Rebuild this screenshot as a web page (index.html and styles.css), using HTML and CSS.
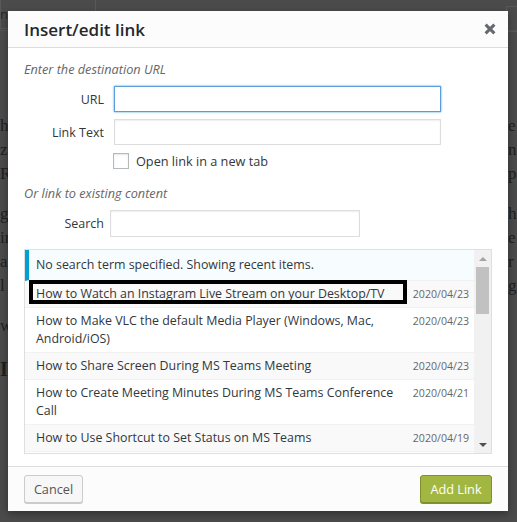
FILE: index.html
```html
<!DOCTYPE html>
<html>
<head>
<meta charset="utf-8">
<link rel="stylesheet" href="styles.css">
</head>
<body>
<div class="page">
  <div class="toolbar">
    <div class="tab">n</div>
    <div class="tab-right"></div>
  </div>
  <div class="content">
    <div class="para">
      <div class="ln"><span class="l">h</span><span class="r">e</span></div>
      <div class="ln"><span class="l">z</span><span class="r">n</span></div>
      <div class="ln"><span class="l">R</span><span class="r">p</span></div>
    </div>
    <div class="para">
      <div class="ln"><span class="l">g</span><span class="r">h</span></div>
      <div class="ln"><span class="l">ir</span><span class="r">e</span></div>
      <div class="ln"><span class="l">a</span><span class="r">r</span></div>
      <div class="ln"><span class="l">l</span><span class="r">g</span></div>
    </div>
    <div class="para">
      <div class="ln"><span class="l">w</span><span class="r"></span></div>
    </div>
    <div class="head"><span class="l">I</span></div>
  </div>
</div>

<div class="modal">
  <div class="modal-head">
    <h1 class="modal-title">Insert/edit link</h1>
    <svg class="close" width="12" height="12" viewBox="0 0 12 12"><path d="M1.6 1.6 L10.4 10.4 M10.4 1.6 L1.6 10.4" stroke="#646970" stroke-width="3" fill="none"/></svg>
  </div>
  <div class="modal-body">
    <div class="hint">Enter the destination URL</div>
    <div class="field first">
      <span class="label">URL</span>
      <span class="input input-focus"></span>
    </div>
    <div class="field">
      <span class="label">Link Text</span>
      <span class="input"></span>
    </div>
    <div class="check-row">
      <span class="checkbox"></span>
      <span class="check-label">Open link in a new tab</span>
    </div>
    <div class="hint hint2">Or link to existing content</div>
    <div class="field search-field">
      <span class="label">Search</span>
      <span class="input search-input"></span>
    </div>
    <div class="results">
      <div class="list">
        <div class="notice">No search term specified. Showing recent items.</div>
        <div class="row alt marked">
          <span class="title">How to Watch an Instagram Live Stream on your Desktop/TV</span>
          <span class="date">2020/04/23</span>
          <span class="mark"></span>
        </div>
        <div class="row">
          <span class="title">How to Make VLC the default Media Player (Windows, Mac,<br>Android/iOS)</span>
          <span class="date">2020/04/23</span>
        </div>
        <div class="row alt">
          <span class="title">How to Share Screen During MS Teams Meeting</span>
          <span class="date">2020/04/23</span>
        </div>
        <div class="row">
          <span class="title">How to Create Meeting Minutes During MS Teams Conference<br>Call</span>
          <span class="date">2020/04/21</span>
        </div>
        <div class="row alt">
          <span class="title">How to Use Shortcut to Set Status on MS Teams</span>
          <span class="date">2020/04/19</span>
        </div>
        <div class="row row-cut"></div>
      </div>
      <div class="scrollbar">
        <div class="sb-btn"><span class="arrow-up"></span></div>
        <div class="sb-track"><div class="sb-thumb"></div></div>
        <div class="sb-btn"><span class="arrow-down"></span></div>
      </div>
    </div>
  </div>
  <div class="modal-foot">
    <button class="btn btn-cancel">Cancel</button>
    <button class="btn btn-primary">Add Link</button>
  </div>
</div>
</body>
</html>
```

FILE: styles.css
```css
html, body {
  margin: 0;
  padding: 0;
}
body {
  width: 517px;
  height: 522px;
  overflow: hidden;
  background: #4b4b4b;
  position: relative;
}

/* dimmed page underneath */
.page {
  font-family: "Liberation Serif", serif;
  color: #1f1f1f;
}
.toolbar {
  height: 30px;
  display: flex;
  justify-content: space-between;
  border-bottom: 1px solid #545454;
}
.tab {
  width: 96px;
  height: 29px;
  box-sizing: border-box;
  border: 1px solid #595959;
  border-top: none;
  font-family: "Open Sans", sans-serif;
  font-size: 13px;
  line-height: 28px;
  color: #262626;
  text-indent: -1px;
}
.tab-right {
  width: 10px;
  height: 24px;
  margin-top: 6px;
  border: 1px solid #595959;
  border-right: none;
}
.content {
  padding-top: 83px;
}
.para {
  margin: 0 0 16px 0;
  font-size: 17px;
  line-height: 24px;
}
.ln {
  display: flex;
  justify-content: space-between;
  height: 24px;
}
.l {
  display: block;
  white-space: nowrap;
}
.r {
  display: block;
  width: 9px;
  white-space: nowrap;
}
.head {
  margin: 20px 0 0 0;
  font-size: 20px;
  font-weight: bold;
}

/* modal */
.modal {
  position: absolute;
  left: 8px;
  top: 11px;
  width: 500px;
  height: 500px;
  background: #fff;
  box-shadow: 0 3px 8px rgba(0, 0, 0, 0.35);
  display: flex;
  flex-direction: column;
  font-family: "Open Sans", sans-serif;
  color: #32373c;
}
.modal-head {
  height: 37px;
  box-sizing: border-box;
  border-bottom: 1px solid #dddddd;
  background: #fcfcfc;
  display: flex;
  align-items: center;
  justify-content: space-between;
  padding: 0 12px 0 16px;
}
.modal-title {
  margin: 0;
  font-size: 17px;
  font-weight: 600;
  color: #23282d;
  line-height: 36px;
  padding-top: 2px;
}
.close {
  display: block;
}
.modal-body {
  flex: 1;
  display: flex;
  flex-direction: column;
  padding: 0 16px 12px 16px;
  min-height: 0;
}
.hint {
  margin-top: 12px;
  font-size: 12.7px;
  line-height: 18px;
  font-style: italic;
  color: #666;
}
.hint2 {
  margin-top: 15px;
}
.field {
  display: flex;
  align-items: center;
  gap: 10px;
  margin-top: 7px;
}
.field.first {
  margin-top: 8px;
}
.label {
  width: 80px;
  text-align: right;
  font-size: 12.5px;
  color: #32373c;
}
.input {
  display: block;
  width: 327px;
  height: 26px;
  box-sizing: border-box;
  border: 1px solid #ddd;
  box-shadow: inset 0 1px 2px rgba(0, 0, 0, 0.07);
  background: #fff;
}
.input-focus {
  border-color: #5b9dd9;
  box-shadow: 0 0 2px rgba(30, 140, 190, 0.8);
}
.check-row {
  display: flex;
  align-items: center;
  gap: 7px;
  margin-top: 7px;
  padding-left: 89px;
}
.checkbox {
  display: block;
  width: 16px;
  height: 16px;
  box-sizing: border-box;
  border: 1px solid #b4b9be;
  background: #fff;
  box-shadow: inset 0 1px 2px rgba(0, 0, 0, 0.1);
}
.check-label {
  font-size: 12.7px;
  color: #32373c;
  line-height: 16px;
  padding-top: 1px;
}
.search-field {
  margin-top: 8px;
  gap: 6px;
}
.search-input {
  width: 250px;
  height: 27px;
}

/* results */
.results {
  margin-top: 12px;
  flex: 1;
  min-height: 0;
  border: 1px solid #dfdfdf;
  display: flex;
  overflow: hidden;
}
.list {
  flex: 1;
  overflow: hidden;
  font-size: 12.4px;
}
.notice {
  padding: 6px 6px 6px 7px;
  border-left: 4px solid #00a0d2;
  border-bottom: 1px solid #f1f1f1;
  background: #f7fcfe;
  line-height: 18px;
  color: #32373c;
}
.row {
  position: relative;
  display: flex;
  justify-content: space-between;
  align-items: flex-start;
  padding: 4px 5px 4px 11px;
  border-bottom: 1px solid #f1f1f1;
  line-height: 18px;
  background: #fff;
}
.row.alt {
  background: #f9f9f9;
}
.row-cut {
  height: 18px;
}
.title {
  white-space: nowrap;
  color: #32373c;
}
.date {
  font-size: 10.6px;
  color: #666;
  line-height: 18px;
}
.mark {
  position: absolute;
  left: 4px;
  top: -1px;
  width: 378px;
  height: 24px;
  box-sizing: border-box;
  border: 4px solid #000;
}
.scrollbar {
  width: 17px;
  background: #f1f1f1;
  display: flex;
  flex-direction: column;
}
.sb-btn {
  height: 17px;
  display: flex;
  align-items: center;
  justify-content: center;
}
.arrow-up {
  width: 0;
  height: 0;
  border-left: 4px solid transparent;
  border-right: 4px solid transparent;
  border-bottom: 4px solid #a3a3a3;
}
.arrow-down {
  width: 0;
  height: 0;
  border-left: 4px solid transparent;
  border-right: 4px solid transparent;
  border-top: 4px solid #505050;
}
.sb-track {
  flex: 1;
  padding: 0 2px;
}
.sb-thumb {
  height: 47px;
  background: #c1c1c1;
}

/* footer */
.modal-foot {
  height: 45px;
  box-sizing: border-box;
  border-top: 1px solid #dddddd;
  background: #fcfcfc;
  display: flex;
  align-items: center;
  justify-content: space-between;
  padding: 0 16px 1px 16px;
}
.btn {
  height: 28px;
  box-sizing: border-box;
  border-radius: 3px;
  font-family: "Open Sans", sans-serif;
  font-size: 12.7px;
  line-height: 26px;
  padding: 0;
  margin: 0;
  white-space: nowrap;
  text-align: center;
}
.btn-cancel {
  width: 59px;
  background: #f7f7f7;
  border: 1px solid #cccccc;
  box-shadow: 0 1px 0 #cccccc;
  color: #555;
}
.btn-primary {
  width: 72px;
  background: #a2b741;
  border: 1px solid #7f922e;
  box-shadow: 0 1px 0 #7f922e;
  color: #fff;
}
```
